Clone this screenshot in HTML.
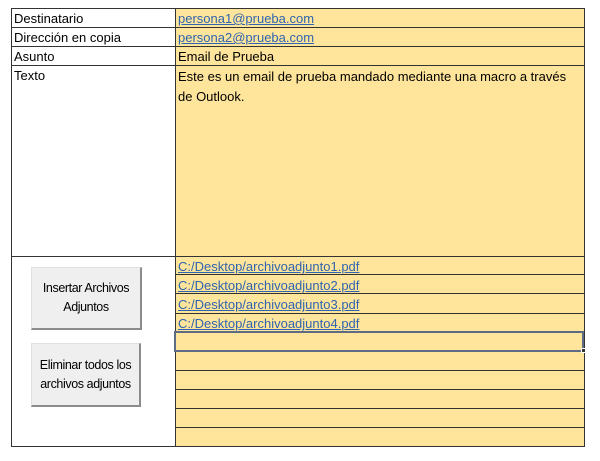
<!DOCTYPE html>
<html><head><meta charset="utf-8"><style>
body{margin:0;width:600px;height:461px;background:#fff;position:relative;font-family:"Liberation Sans",sans-serif;font-size:13px;color:#000;overflow:hidden}
.a{position:absolute;box-sizing:border-box}
.y{background:#ffe59b}
.l{color:#2f64b0;text-decoration:underline}
.t{position:absolute;white-space:nowrap;line-height:19px;top:0}
.h{position:absolute;height:1px;background:#333}
.v{position:absolute;width:1px;background:#333}
.btn{position:absolute;background:#efefef;border-right:2px solid #8c8c8c;border-bottom:2px solid #8c8c8c;border-top:1px solid #e0e0e0;border-left:1px solid #e0e0e0;display:flex;align-items:center;justify-content:center;text-align:center;font-size:12.5px;line-height:19px;letter-spacing:-0.4px}
</style></head><body>
<div class="a y" style="left:175px;top:8px;width:409px;height:439px"></div>
<div class="h" style="left:11px;top:8px;width:574px"></div>
<div class="h" style="left:11px;top:27px;width:574px"></div>
<div class="h" style="left:11px;top:46px;width:574px"></div>
<div class="h" style="left:11px;top:65px;width:574px"></div>
<div class="h" style="left:11px;top:256px;width:574px"></div>
<div class="h" style="left:175px;top:274px;width:410px"></div>
<div class="h" style="left:175px;top:293px;width:410px"></div>
<div class="h" style="left:175px;top:313px;width:410px"></div>
<div class="h" style="left:175px;top:332px;width:410px"></div>
<div class="h" style="left:175px;top:351px;width:410px"></div>
<div class="h" style="left:175px;top:370px;width:410px"></div>
<div class="h" style="left:175px;top:389px;width:410px"></div>
<div class="h" style="left:175px;top:408px;width:410px"></div>
<div class="h" style="left:175px;top:427px;width:410px"></div>
<div class="h" style="left:11px;top:446px;width:574px"></div>
<div class="v" style="left:11px;top:8px;height:439px"></div>
<div class="v" style="left:175px;top:8px;height:439px"></div>
<div class="v" style="left:584px;top:8px;height:439px"></div>
<div class="a" style="left:174px;top:331px;width:410px;height:21px;border:2px solid #5d6b85"></div>
<div class="a" style="left:581px;top:348px;width:5px;height:5px;background:#333;border:1px solid #fff"></div>
<div class="t" style="left:14px;top:9px">Destinatario</div>
<div class="t" style="left:14px;top:28px">Dirección en copia</div>
<div class="t" style="left:14px;top:47px">Asunto</div>
<div class="t" style="left:14px;top:66px">Texto</div>
<div class="t l" style="left:178px;top:9px">persona1@prueba.com</div>
<div class="t l" style="left:178px;top:28px">persona2@prueba.com</div>
<div class="t" style="left:178px;top:47px">Email de Prueba</div>
<div class="t" style="left:178px;top:67px">Este es un email de prueba mandado mediante una macro a través</div>
<div class="t" style="left:178px;top:87px">de Outlook.</div>
<div class="t l" style="left:178px;top:257px">C:/Desktop/archivoadjunto1.pdf</div>
<div class="t l" style="left:178px;top:276px">C:/Desktop/archivoadjunto2.pdf</div>
<div class="t l" style="left:178px;top:295px">C:/Desktop/archivoadjunto3.pdf</div>
<div class="t l" style="left:178px;top:314px">C:/Desktop/archivoadjunto4.pdf</div>
<div class="btn" style="left:31px;top:267px;width:108px;height:60px">Insertar Archivos<br>Adjuntos</div>
<div class="btn" style="left:31px;top:343px;width:107px;height:61px">Eliminar todos los<br>archivos adjuntos</div>
</body></html>
